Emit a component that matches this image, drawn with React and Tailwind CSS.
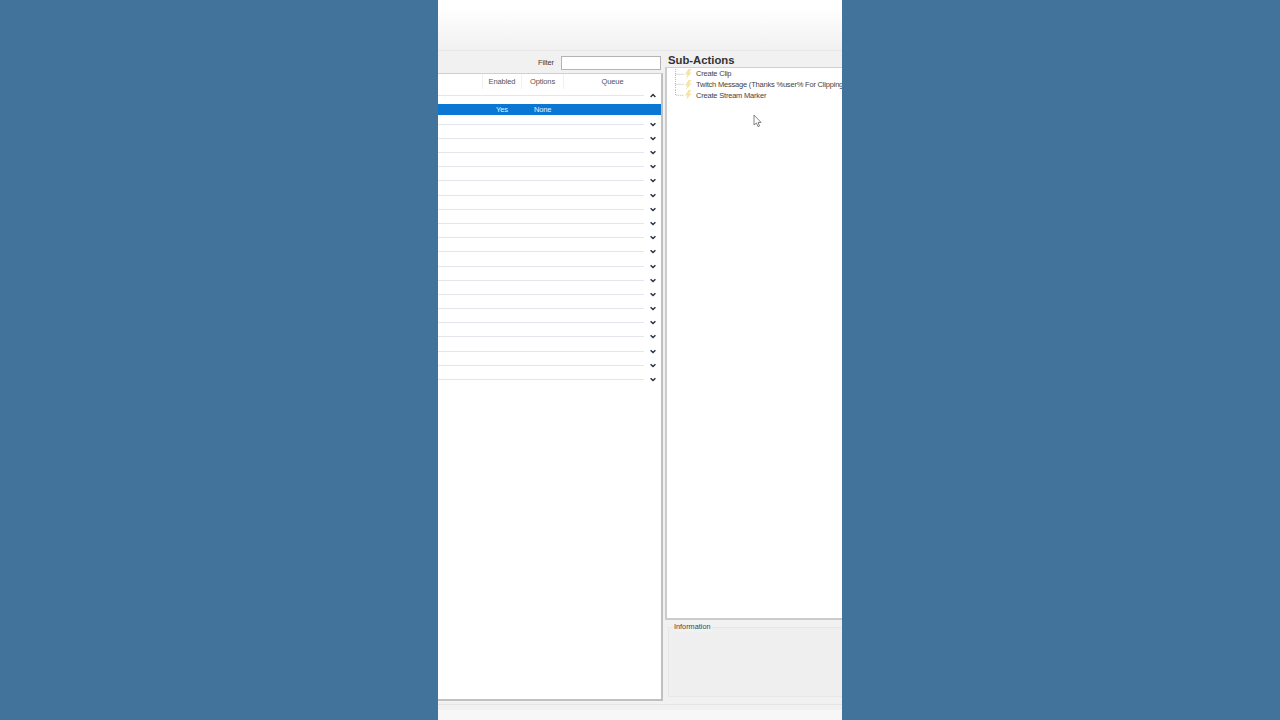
const ROW_COUNT = 21;

function Chevron({ up }) {
  return (
    <svg className="w-[6px] h-[5px] shrink-0" viewBox="0 0 6 5" fill="none" stroke="#26303f" strokeWidth="1.4">
      <path d={up ? 'M0.6 4 L3 1.6 L5.4 4' : 'M0.6 1.2 L3 3.6 L5.4 1.2'} />
    </svg>
  );
}

function Bolt() {
  return (
    <svg className="w-[8px] h-[10px] shrink-0" viewBox="0 0 8 10" fill="#f5e4a6">
      <path d="M4.5 0 L7.5 0 L5.2 3.6 L7.6 3.6 L2 10 L3.4 5.4 L1 5.4 Z" />
    </svg>
  );
}

function GroupRow({ index }) {
  if (index === 1) {
    return (
      <div className="h-[14.2px] flex items-center">
        <div className="w-full h-[11px] bg-[#0a78d2] flex items-center text-[7.5px] tracking-[-0.15px] text-[#e8f2fb]">
          <span className="ml-[58px] w-[12px] text-center">Yes</span>
          <span className="ml-[26px]">None</span>
        </div>
      </div>
    );
  }
  return (
    <div className="h-[14.2px] flex items-center">
      <div className="flex-1 h-px bg-[#e3e6ea]"></div>
      <div className="w-[17px] pl-[6px] flex items-center">
        <Chevron up={index === 0} />
      </div>
    </div>
  );
}

function SubAction({ label, last }) {
  return (
    <div className="h-[10.7px] flex items-center">
      <svg className="w-[9px] h-[10.7px] shrink-0" viewBox="0 0 9 10.7" fill="none" stroke="#a8a8a8" strokeWidth="0.8" strokeDasharray="1 1">
        <path d={last ? 'M0.5 0 V5.3 H9' : 'M0.5 0 V10.7 M0.5 5.3 H9'} />
      </svg>
      <Bolt />
      <span className="ml-[4px] whitespace-nowrap text-[7.5px] tracking-[-0.2px] text-[#444]">{label}</span>
    </div>
  );
}

export default function App() {
  return (
    <div className="w-[1280px] h-[720px] bg-[#41739b] flex justify-center overflow-hidden font-['Liberation_Sans',sans-serif]">
      <div className="w-[404px] h-full flex flex-col bg-[#f1f1f1]">
        <div className="h-[51px] shrink-0 bg-gradient-to-b from-white from-15% to-[#f1f1f1] border-b border-[#e8e8e8]"></div>

        <div className="flex-1 flex min-h-0">
          {/* left panel */}
          <div className="w-[225px] shrink-0 flex flex-col">
            <div className="h-[22px] shrink-0 flex items-center justify-end pt-[2px] pr-[2px]">
              <span className="text-[7.5px] tracking-[-0.1px] text-[#3c3c3c] mr-[7px]">Filter</span>
              <div className="w-[100px] h-[14px] bg-white border border-[#b4b4b4]"></div>
            </div>
            <div className="h-[628px] bg-white border-t border-r-2 border-b-2 border-t-[#d0d0d0] border-r-[#c0c0c0] border-b-[#c0c0c0]">
              <div className="h-[15px] -mb-[0.3px] flex items-center justify-end text-[7.5px] tracking-[-0.1px] text-[#555]">
                <div className="w-[40px] h-full flex items-center justify-center border-x border-[#f0f0f0]">Enabled</div>
                <div className="w-[41px] h-full flex items-center justify-center">Options</div>
                <div className="w-[98px] h-full flex items-center justify-center border-l border-[#f0f0f0]">Queue</div>
              </div>
              <div>
                {Array.from({ length: ROW_COUNT }, (_, i) => (
                  <GroupRow key={i} index={i} />
                ))}
              </div>
            </div>
          </div>

          {/* right panel */}
          <div className="flex-1 min-w-0 pl-[2px] flex flex-col">
            <div className="h-[16px] shrink-0 pl-[3px] pt-[2px] text-[11.3px] leading-[14px] font-bold text-[#333] whitespace-nowrap">
              Sub-Actions
            </div>
            <div className="h-[553px] shrink-0 bg-white border-t border-l-2 border-b-2 border-t-[#d0d0d0] border-l-[#cccccc] border-b-[#cccccc] pl-[8px] pt-[0.5px] overflow-hidden">
              <SubAction label="Create Clip" />
              <SubAction label="Twitch Message (Thanks %user% For Clipping)" />
              <SubAction label="Create Stream Marker" last />
            </div>
            <div className="relative mt-[7px] ml-[3px] h-[70px] border border-r-0 border-[#e7e7e7] bg-[#efefef]">
              <span className="absolute left-[4px] -top-[6px] bg-[#f1f1f1] px-[1px] text-[7.3px] leading-[10px] text-[#444]">Information</span>
            </div>
          </div>
        </div>

        <div className="h-[16px] shrink-0 mt-[3px] border-t border-[#e4e4e4]">
          <div className="h-[5px]"></div>
          <div className="h-[10px] bg-[#f7f7f7]"></div>
        </div>

        {/* mouse cursor over the list */}
        <svg className="absolute left-[753px] top-[114px] w-[9px] h-[14px]" viewBox="0 0 9 14" fill="white" stroke="#666" strokeWidth="0.8">
          <path d="M1 1 L1 11 L3.4 9 L5 12.6 L6.6 12 L5 8.6 L8 8.4 Z" />
        </svg>
      </div>
    </div>
  );
}
